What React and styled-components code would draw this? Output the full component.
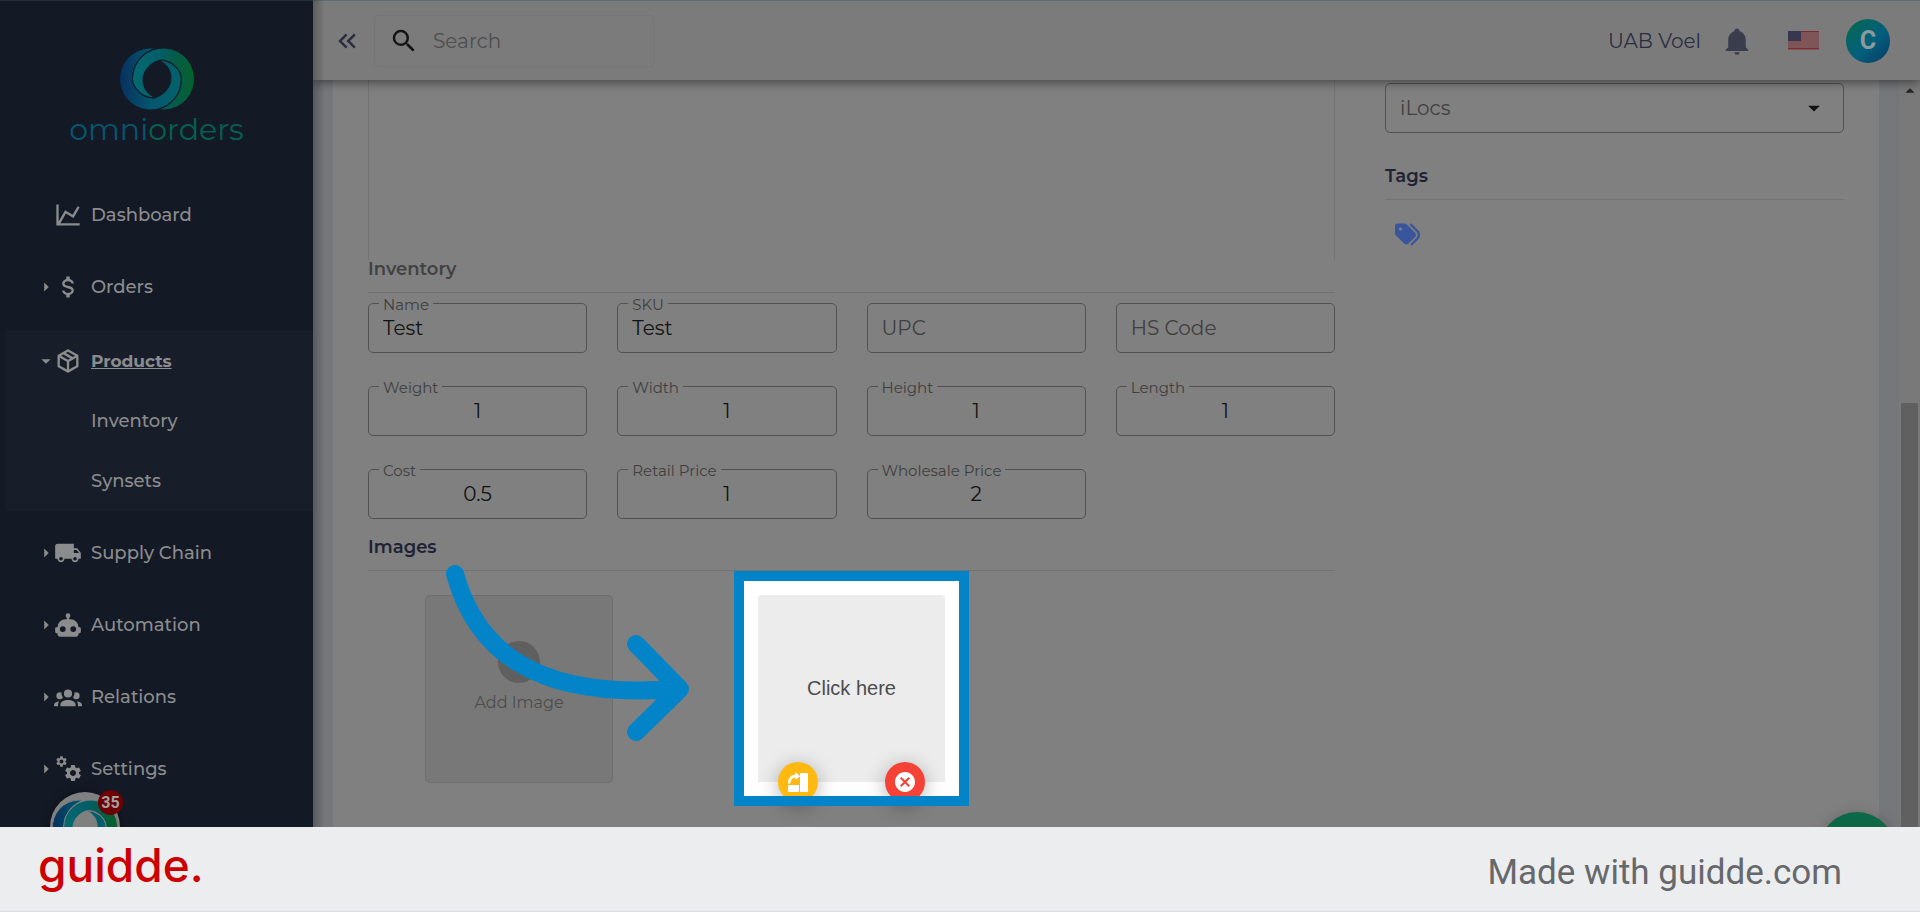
import React, { useState } from "react";
import styled, { createGlobalStyle, css } from "styled-components";
import { FaTags } from "react-icons/fa6";
import {
  MdAdd,
  MdArrowDropDown,
  MdArrowDropUp,
  MdArrowRight,
  MdCancel,
  MdKeyboardDoubleArrowLeft,
  MdLocalShipping,
  MdSearch,
  MdSettings,
} from "react-icons/md";

const paths = {
  chart:
    "M16,11.78L20.24,4.45L21.97,5.45L16.74,14.5L10.23,10.75L5.46,19H22V21H2V3H4V17.54L9.5,8L16,11.78Z",
  dollar:
    "M7,15H9C9,16.08 10.37,17 12,17C13.63,17 15,16.08 15,15C15,13.9 13.96,13.5 11.76,12.97C9.64,12.44 7,11.78 7,9C7,7.21 8.47,5.69 10.5,5.18V3H13.5V5.18C15.53,5.69 17,7.21 17,9H15C15,7.92 13.63,7 12,7C10.37,7 9,7.92 9,9C9,10.1 10.04,10.5 12.24,11.03C14.36,11.56 17,12.22 17,15C17,16.79 15.53,18.31 13.5,18.82V21H10.5V18.82C8.47,18.31 7,16.79 7,15Z",
  box: "M21,16.5C21,16.88 20.79,17.21 20.47,17.38L12.57,21.82C12.41,21.94 12.21,22 12,22C11.79,22 11.59,21.94 11.43,21.82L3.53,17.38C3.21,17.21 3,16.88 3,16.5V7.5C3,7.12 3.21,6.79 3.53,6.62L11.43,2.18C11.59,2.06 11.79,2 12,2C12.21,2 12.41,2.06 12.57,2.18L20.47,6.62C20.79,6.79 21,7.12 21,7.5V16.5M12,4.15L10.11,5.22L16,8.61L17.96,7.5L12,4.15M6.04,7.5L12,10.85L13.96,9.75L8.08,6.35L6.04,7.5M5,15.91L11,19.29V12.58L5,9.21V15.91M19,15.91V9.21L13,12.58V19.29L19,15.91Z",
  robot:
    "M12,2A2,2 0 0,1 14,4C14,4.74 13.6,5.39 13,5.73V7H14A7,7 0 0,1 21,14H22A1,1 0 0,1 23,15V18A1,1 0 0,1 22,19H21V20A2,2 0 0,1 19,22H5A2,2 0 0,1 3,20V19H2A1,1 0 0,1 1,18V15A1,1 0 0,1 2,14H3A7,7 0 0,1 10,7H11V5.73C10.4,5.39 10,4.74 10,4A2,2 0 0,1 12,2M7.5,13A2.5,2.5 0 0,0 5,15.5A2.5,2.5 0 0,0 7.5,18A2.5,2.5 0 0,0 10,15.5A2.5,2.5 0 0,0 7.5,13M16.5,13A2.5,2.5 0 0,0 14,15.5A2.5,2.5 0 0,0 16.5,18A2.5,2.5 0 0,0 19,15.5A2.5,2.5 0 0,0 16.5,13Z",
  people:
    "M12,5.5A3.5,3.5 0 0,1 15.5,9A3.5,3.5 0 0,1 12,12.5A3.5,3.5 0 0,1 8.5,9A3.5,3.5 0 0,1 12,5.5M5,8C5.56,8 6.08,8.15 6.53,8.42C6.38,9.85 6.8,11.27 7.66,12.38C7.16,13.34 6.16,14 5,14A3,3 0 0,1 2,11A3,3 0 0,1 5,8M19,8A3,3 0 0,1 22,11A3,3 0 0,1 19,14C17.84,14 16.84,13.34 16.34,12.38C17.2,11.27 17.62,9.85 17.47,8.42C17.92,8.15 18.44,8 19,8M5.5,18.25C5.5,16.18 8.41,14.5 12,14.5C15.59,14.5 18.5,16.18 18.5,18.25V20H5.5V18.25M0,20V18.5C0,17.11 1.89,15.94 4.45,15.6C3.86,16.28 3.5,17.22 3.5,18.25V20H0M24,20H20.5V18.25C20.5,17.22 20.14,16.28 19.55,15.6C22.11,15.94 24,17.11 24,18.5V20Z",
  bell: "M21,19V20H3V19L5,17V11C5,7.9 7.03,5.17 10,4.29C10,4.19 10,4.1 10,4A2,2 0 0,1 12,2A2,2 0 0,1 14,4C14,4.1 14,4.19 14,4.29C16.97,5.17 19,7.9 19,11V17L21,19M14,21A2,2 0 0,1 12,23A2,2 0 0,1 10,21",
};

const Icon = ({ name, size = 28 }) => (
  <svg width={size} height={size} viewBox="0 0 24 24" fill="currentColor">
    <path d={paths[name]} />
  </svg>
);

const Cogs = () => (
  <svg width="28" height="28" viewBox="0 0 28 28">
    <MdSettings x="1" y="0" size="13" />
    <MdSettings x="9" y="8" size="20" />
  </svg>
);

const ringPath =
  "M-1,-30.5A31 31 0 1 0 24.5,0A23 21 0 0 0 1,-19C9,-16 14,-9 14,-1C14,9 5,18 -4,19A21 21 0 0 1 -24.5,0A31 31 0 0 1 -1,-30.5Z";

const Rings = ({ id, width, height, gap }) => (
  <svg width={width} height={height} viewBox="-38 -32 76 64">
    <defs>
      <linearGradient id={`${id}-blue`}>
        <stop offset="0" stopColor="#07305f" />
        <stop offset="0.5" stopColor="#04566e" />
        <stop offset="1" stopColor="#03626a" />
      </linearGradient>
      <linearGradient id={`${id}-green`}>
        <stop offset="0" stopColor="#05622a" />
        <stop offset="0.3" stopColor="#045c48" />
        <stop offset="0.6" stopColor="#045e6a" />
        <stop offset="1" stopColor="#046a72" />
      </linearGradient>
    </defs>
    <path d={ringPath} fill={`url(#${id}-blue)`} stroke={gap} />
    <path
      d={ringPath}
      transform="rotate(180)"
      fill={`url(#${id}-green)`}
      stroke={gap}
    />
  </svg>
);

const RotateIcon = () => (
  <svg width="20" height="20" viewBox="0 0 20 20" fill="#fff">
    <rect x="12" y="1" width="8" height="19" rx="1" />
    <rect x="0" y="13" width="11" height="7" rx="1" />
    <path d="M0 11.500C0 6.500 3 2.800 7.500 2.600V0L12 4.200L7.500 8V5.600C4.600 5.700 2.600 8 2.300 11.500Z" />
  </svg>
);

const Flag = () => (
  <svg width="31" height="19" viewBox="0 0 31 19">
    <rect width="31" height="19" fill="#805558" />
    <path d="M0 0.500H31M0 17.500H31" stroke="#7a2a33" />
    <rect width="13" height="10" fill="#37374f" />
  </svg>
);

const menu = [
  { label: "Dashboard", icon: <Icon name="chart" /> },
  { label: "Orders", icon: <Icon name="dollar" />, nested: true },
  {
    label: "Products",
    icon: <Icon name="box" />,
    nested: true,
    children: ["Inventory", "Synsets"],
  },
  { label: "Supply Chain", icon: <MdLocalShipping size={28} />, nested: true },
  { label: "Automation", icon: <Icon name="robot" />, nested: true },
  { label: "Relations", icon: <Icon name="people" />, nested: true },
  { label: "Settings", icon: <Cogs />, nested: true },
];

const fields = [
  { id: "name", label: "Name", value: "Test" },
  { id: "sku", label: "SKU", value: "Test" },
  { id: "upc", label: "UPC", value: "" },
  { id: "hs", label: "HS Code", value: "" },
  { id: "weight", label: "Weight", value: "1", number: true },
  { id: "width", label: "Width", value: "1", number: true },
  { id: "height", label: "Height", value: "1", number: true },
  { id: "length", label: "Length", value: "1", number: true },
  { id: "cost", label: "Cost", value: "0.5", number: true },
  { id: "retail", label: "Retail Price", value: "1", number: true },
  { id: "wholesale", label: "Wholesale Price", value: "2", number: true },
];

function Sidebar() {
  return (
    <Side>
      <Brand>
        <Rings id="brand" width={76} height={64} gap="#141926" />
        <BrandName>
          omni<span>orders</span>
        </BrandName>
      </Brand>
      <nav>
        <Menu>
          {menu.map((item) => (
            <MenuGroup key={item.label} $open={!!item.children}>
              <MenuLink href="#" $active={!!item.children}>
                <Caret>
                  {item.nested &&
                    (item.children ? (
                      <MdArrowDropDown size={22} />
                    ) : (
                      <MdArrowRight size={22} />
                    ))}
                </Caret>
                {item.icon}
                <span>{item.label}</span>
              </MenuLink>
              {item.children?.map((child) => (
                <SubLink href="#" key={child}>
                  {child}
                </SubLink>
              ))}
            </MenuGroup>
          ))}
        </Menu>
      </nav>
      <Bubble type="button" aria-label="Notifications">
        <Rings id="bubble" width={66} height={56} gap="#808080" />
        <Badge>35</Badge>
      </Bubble>
    </Side>
  );
}

function TopBar() {
  return (
    <Header>
      <IconButton type="button" aria-label="Collapse menu">
        <MdKeyboardDoubleArrowLeft size={30} />
      </IconButton>
      <SearchBox>
        <MdSearch size={30} />
        <input type="search" placeholder="Search" />
      </SearchBox>
      <Company>UAB Voel</Company>
      <Tools>
        <IconButton type="button" aria-label="Alerts">
          <Icon name="bell" size={30} />
        </IconButton>
        <IconButton type="button" aria-label="Language">
          <Flag />
        </IconButton>
      </Tools>
      <Avatar type="button">C</Avatar>
    </Header>
  );
}

function Field({ id, label, value, number }) {
  const [text, setText] = useState(value);
  return (
    <FieldBox>
      <FieldLabel htmlFor={id} $floating={text !== ""}>
        {label}
      </FieldLabel>
      <FieldInput
        id={id}
        value={text}
        $center={number}
        onChange={(e) => setText(e.target.value)}
      />
    </FieldBox>
  );
}

export default function App() {
  return (
    <Page>
      <GlobalStyle />
      <Workspace>
        <Sidebar />
        <Main>
          <TopBar />
          <Body>
            <Card>
              <Details>
                <Editor />
                <SectionTitle $muted>Inventory</SectionTitle>
                <FieldGrid>
                  {fields.map((field) => (
                    <Field key={field.id} {...field} />
                  ))}
                </FieldGrid>
                <SectionTitle $space={19}>Images</SectionTitle>
                <ImageRow>
                  <AddTile type="button">
                    <AddCircle>
                      <MdAdd size={28} />
                    </AddCircle>
                    Add Image
                  </AddTile>
                  <Highlight>
                    <ImageTile>
                      Click here
                      <TileActions>
                        <RoundButton
                          type="button"
                          aria-label="Rotate"
                          $color="#ffb911"
                        >
                          <RotateIcon />
                        </RoundButton>
                        <RoundButton
                          type="button"
                          aria-label="Remove"
                          $color="#f44236"
                        >
                          <MdCancel size={24} color="#fff" />
                        </RoundButton>
                      </TileActions>
                    </ImageTile>
                  </Highlight>
                  <Pointer viewBox="440 560 256 190">
                    <path d="M455 574C476 650 535 700 675 689" />
                    <path d="M636 644L680 689L636 732" />
                  </Pointer>
                </ImageRow>
              </Details>
              <Aside>
                <SelectBox>
                  <select aria-label="Location" defaultValue="iLocs">
                    <option>iLocs</option>
                  </select>
                  <MdArrowDropDown size={28} />
                </SelectBox>
                <SectionTitle $space={34}>Tags</SectionTitle>
                <TagButton type="button" aria-label="Add tag">
                  <FaTags size={25} />
                </TagButton>
              </Aside>
            </Card>
            <Scrollbar>
              <MdArrowDropUp size={22} />
              <Thumb />
            </Scrollbar>
          </Body>
          <Fab type="button" aria-label="Save" />
        </Main>
      </Workspace>
      <Footer>
        <FooterLogo>guidde.</FooterLogo>
        <FooterLink href="#">Made with guidde.com</FooterLink>
      </Footer>
    </Page>
  );
}

const GlobalStyle = createGlobalStyle`
  * {
    box-sizing: border-box;
  }
  body {
    margin: 0;
    font-family: Montserrat, Inter, "Open Sans", sans-serif;
  }
  button, input, select {
    font: inherit;
    color: inherit;
    background: none;
    border: 0;
    margin: 0;
    padding: 0;
  }
  svg {
    display: block;
    flex-shrink: 0;
  }
`;

const Page = styled.div`
  height: 100vh;
  display: flex;
  flex-direction: column;
`;

const Workspace = styled.div`
  flex: 1;
  min-height: 0;
  display: flex;
  overflow: hidden;
`;

const Side = styled.aside`
  position: relative;
  z-index: 2;
  width: 313px;
  flex-shrink: 0;
  overflow: hidden;
  background: #141926;
  border-top: 1px solid #1f3038;
  color: #8b8c8e;
`;

const Brand = styled.div`
  display: flex;
  flex-direction: column;
  align-items: center;
  padding: 46px 0 36px;
`;

const BrandName = styled.div`
  font-size: 30px;
  font-weight: 400;
  line-height: 38px;
  color: #04566e;
  span {
    color: #046050;
  }
`;

const Menu = styled.ul`
  list-style: none;
  margin: 0;
  padding: 0;
  display: flex;
  flex-direction: column;
  gap: 12px;
`;

const MenuGroup = styled.li`
  padding-left: 5px;
  ${({ $open }) =>
    $open &&
    css`
      margin-top: 2px;
      background: linear-gradient(90deg, #141926 5px, #181e29 5px);
    `}
`;

const MenuLink = styled.a`
  display: flex;
  align-items: center;
  height: 60px;
  padding-left: 30px;
  font-size: 18px;
  font-weight: 500;
  color: inherit;
  text-decoration: none;
  > span:last-child {
    margin-left: 9px;
  }
  ${({ $active }) =>
    $active &&
    css`
      font-size: 17px;
      font-weight: 700;
      > span:last-child {
        text-decoration: underline;
      }
    `}
`;

const Caret = styled.span`
  width: 22px;
  margin-right: -3px;
`;

const SubLink = styled.a`
  display: flex;
  align-items: center;
  height: 60px;
  padding-left: 86px;
  font-size: 18px;
  font-weight: 500;
  color: inherit;
  text-decoration: none;
`;

const Bubble = styled.button`
  position: absolute;
  left: 50px;
  bottom: -35px;
  width: 70px;
  height: 70px;
  border-radius: 50%;
  background: #808080;
  display: flex;
  align-items: center;
  justify-content: center;
  box-shadow: 0 0 10px rgba(0, 0, 0, 0.4);
`;

const Badge = styled.span`
  position: absolute;
  top: -2px;
  right: -3px;
  width: 25px;
  height: 25px;
  border-radius: 50%;
  background: #6e0003;
  color: #a3a3a3;
  font-family: Roboto, sans-serif;
  font-size: 16px;
  font-weight: 700;
  line-height: 25px;
  text-align: center;
`;

const Main = styled.main`
  position: relative;
  flex: 1;
  min-width: 0;
  display: flex;
  flex-direction: column;
  background: #75777b;
  &::before {
    content: "";
    position: absolute;
    z-index: 2;
    inset: 0 auto 0 0;
    width: 12px;
    background: linear-gradient(90deg, rgba(0, 0, 0, 0.25), transparent);
  }
`;

const Header = styled.header`
  position: relative;
  z-index: 1;
  height: 80px;
  flex-shrink: 0;
  display: flex;
  align-items: center;
  padding: 0 30px 0 19px;
  background: #7b7b7b;
  border-top: 1px solid #5c6e73;
  box-shadow: 0 2px 10px rgba(0, 0, 0, 0.5);
  color: #2b2e42;
`;

const IconButton = styled.button`
  cursor: pointer;
`;

const SearchBox = styled.label`
  display: flex;
  align-items: center;
  gap: 14px;
  width: 280px;
  height: 52px;
  margin-left: 12px;
  padding: 0 14px;
  border: 1px solid #767676;
  border-radius: 4px;
  color: #131313;
  input {
    flex: 1;
    min-width: 0;
    outline: none;
    font-size: 20px;
  }
  input::placeholder {
    color: #4e4e4e;
    opacity: 1;
  }
`;

const Company = styled.span`
  margin-left: auto;
  font-size: 20px;
`;

const Tools = styled.div`
  display: flex;
  align-items: center;
  gap: 36px;
  margin: 0 27px 0 21px;
  color: #393d4d;
`;

const Avatar = styled.button`
  width: 44px;
  height: 44px;
  border-radius: 50%;
  background: linear-gradient(135deg, #046a4c, #045f7c 55%, #063a66);
  color: #8c9a9c;
  font-family: Roboto, sans-serif;
  font-size: 25px;
  font-weight: 700;
`;

const Body = styled.div`
  flex: 1;
  min-height: 0;
  display: flex;
`;

const Card = styled.div`
  flex: 1;
  min-width: 0;
  display: grid;
  grid-template-columns: 967fr 459fr;
  gap: 50px;
  margin: 0 20px;
  padding: 0 35px;
  background: #808080;
`;

const Details = styled.section`
  min-width: 0;
`;

const Aside = styled.section`
  min-width: 0;
  padding-top: 3px;
`;

const Editor = styled.div`
  height: 180px;
  border: solid #737373;
  border-width: 0 1px;
`;

const SectionTitle = styled.h2`
  margin: ${({ $space = 0 }) => $space}px 0 0;
  padding-bottom: 14px;
  border-bottom: 1px solid #727272;
  font-size: 18px;
  font-weight: 600;
  line-height: 18px;
  color: ${({ $muted }) => ($muted ? "#424242" : "#1f2234")};
`;

const FieldGrid = styled.div`
  display: grid;
  grid-template-columns: repeat(4, 1fr);
  gap: 33px 30px;
  margin-top: 10px;
`;

const FieldBox = styled.div`
  position: relative;
  height: 50px;
  border: 1px solid #525252;
  border-radius: 5px;
`;

const FieldLabel = styled.label`
  position: absolute;
  left: 10px;
  top: 14px;
  padding: 0 4px;
  font-size: 20px;
  line-height: 20px;
  color: #3f3f3f;
  background: #808080;
  ${({ $floating }) =>
    $floating &&
    css`
      top: -9px;
      font-size: 15px;
    `}
`;

const FieldInput = styled.input`
  width: 100%;
  height: 100%;
  padding: 0 14px;
  font-size: 20px;
  color: #131313;
  text-align: ${({ $center }) => ($center ? "center" : "left")};
  outline: none;
`;

const ImageRow = styled.div`
  position: relative;
  display: flex;
  align-items: flex-start;
  gap: 121px;
  padding-left: 57px;
`;

const AddTile = styled.button`
  width: 188px;
  height: 188px;
  margin-top: 24px;
  padding-bottom: 24px;
  display: flex;
  flex-direction: column;
  align-items: center;
  justify-content: center;
  gap: 10px;
  border: 1px solid #6e6e6e;
  border-radius: 5px;
  background: #787878;
  color: #4d4d4d;
  font-size: 16px;
  line-height: 20px;
`;

const AddCircle = styled.span`
  width: 42px;
  height: 42px;
  border-radius: 50%;
  display: flex;
  align-items: center;
  justify-content: center;
  background: #5f5f5f;
  color: #787878;
`;

const Highlight = styled.div`
  position: relative;
  padding: 24px;
  background: #fff;
  &::after {
    content: "";
    position: absolute;
    inset: 0;
    border: 10px solid #0484c8;
    pointer-events: none;
  }
`;

const ImageTile = styled.div`
  position: relative;
  width: 187px;
  height: 187px;
  display: flex;
  align-items: center;
  justify-content: center;
  border-radius: 4px 4px 0 0;
  background: #ececec;
  color: #4d4d4d;
  font-family: "Liberation Sans", Arial, sans-serif;
  font-size: 20px;
`;

const TileActions = styled.div`
  position: absolute;
  left: 20px;
  right: 20px;
  bottom: -20px;
  display: flex;
  justify-content: space-between;
`;

const RoundButton = styled.button`
  width: 40px;
  height: 40px;
  border-radius: 50%;
  display: flex;
  align-items: center;
  justify-content: center;
  background: ${({ $color }) => $color};
  box-shadow: 0 4px 20px rgba(0, 0, 0, 0.3);
`;

const Pointer = styled.svg`
  position: absolute;
  left: 72px;
  top: -11px;
  width: 256px;
  height: 190px;
  fill: none;
  stroke: #0484c8;
  stroke-width: 18px;
  stroke-linecap: round;
  stroke-linejoin: round;
`;

const SelectBox = styled.div`
  display: flex;
  align-items: center;
  height: 50px;
  padding-right: 15px;
  border: 1px solid #525252;
  border-radius: 5px;
  color: #131313;
  select {
    flex: 1;
    height: 100%;
    padding-left: 14px;
    appearance: none;
    color: #404040;
    font-size: 20px;
  }
`;

const TagButton = styled.button`
  margin: 22px 0 0 10px;
  color: #39559b;
`;

const Scrollbar = styled.div`
  width: 21px;
  display: flex;
  flex-direction: column;
  align-items: center;
  background: #797979;
  color: #262626;
`;

const Thumb = styled.div`
  width: 17px;
  flex: 1;
  margin-top: 301px;
  background: #606060;
`;

const Fab = styled.button`
  position: absolute;
  right: 25px;
  bottom: -61px;
  width: 76px;
  height: 76px;
  border-radius: 50%;
  background: #0d6847;
  box-shadow: 0 4px 16px rgba(0, 0, 0, 0.3);
`;

const Footer = styled.footer`
  position: relative;
  z-index: 3;
  height: 85px;
  flex-shrink: 0;
  display: flex;
  align-items: center;
  justify-content: space-between;
  padding: 0 78px 0 38px;
  background: #ecedef;
  border-bottom: 1px solid #dcdee2;
`;

const FooterLogo = styled.span`
  padding-bottom: 8px;
  color: #cc0000;
  font-family: Inter, sans-serif;
  font-size: 46px;
  font-weight: 500;
  line-height: 56px;
`;

const FooterLink = styled.a`
  padding-top: 8px;
  color: #66686b;
  font-family: Roboto, sans-serif;
  font-size: 35px;
  line-height: 42px;
  text-decoration: none;
`;
